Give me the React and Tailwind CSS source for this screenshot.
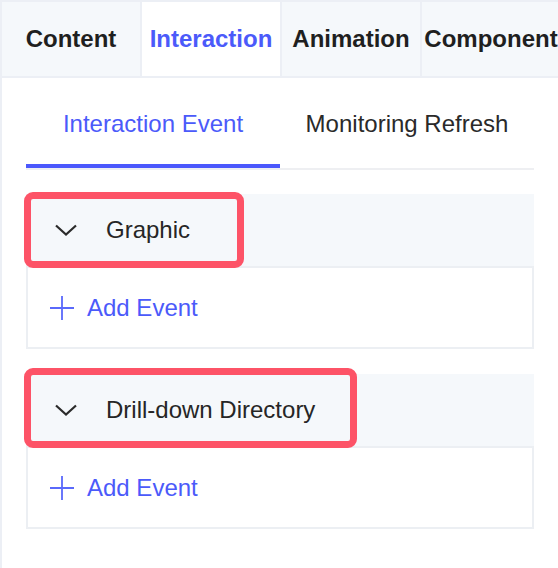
import React from 'react'

const topTabs = ['Content', 'Interaction', 'Animation', 'Component']
const subTabs = ['Interaction Event', 'Monitoring Refresh']

const sections = [
  { title: 'Graphic', gap: 'mt-6', mark: 'top-[-2px] h-[76px] w-[220px]' },
  { title: 'Drill-down Directory', gap: 'mt-[25px]', mark: 'top-[-6px] h-[80px] w-[333px]' },
]

function Chevron() {
  return (
    <svg width="22" height="12" viewBox="0 0 22 12" fill="none">
      <path d="M1 1.5 L11 10.5 L21 1.5" stroke="#2b2b2b" strokeWidth="2.2" />
    </svg>
  )
}

function PlusIcon() {
  return (
    <svg width="24" height="24" viewBox="0 0 24 24" fill="none">
      <path d="M12 0 V24 M0 12 H24" stroke="#5a69fb" strokeWidth="1.8" />
    </svg>
  )
}

export default function App() {
  return (
    <div className="h-[568px] w-[558px] overflow-hidden border-l-2 border-[#eceff5] bg-white font-['Liberation_Sans',Arial,sans-serif] text-[24px]">
      {/* top tabs */}
      <div className="flex h-[78px] gap-[2px] border-y-2 border-[#eceff5] bg-[#eceff5]">
        {topTabs.map((t, i) => (
          <div
            key={t}
            className={
              i === 1
                ? 'flex w-[138px] shrink-0 items-center justify-center bg-white font-bold text-[#4b5afa]'
                : 'flex w-[138px] shrink-0 items-center justify-center bg-[#f5f8fb] font-bold text-[#1f1f1f]'
            }
          >
            {t}
          </div>
        ))}
      </div>

      <div className="px-6">
        {/* sub tabs */}
        <div className="flex border-b-2 border-[#eeeff2]">
          {subTabs.map((t, i) => (
            <div
              key={t}
              className={
                i === 0
                  ? 'flex h-[90px] flex-1 items-center justify-center border-b-4 border-[#4b58fc] pt-[6px] text-[#4b5afa]'
                  : 'flex h-[90px] flex-1 items-center justify-center border-b-4 border-transparent pt-[6px] text-[#2a2a2a]'
              }
            >
              {t}
            </div>
          ))}
        </div>

        {sections.map((s) => (
          <div key={s.title} className={s.gap}>
            <div className="relative flex h-[72px] items-center gap-[29px] bg-[#f5f8fb] pl-[29px] text-[#262626]">
              <Chevron />
              <span>{s.title}</span>
              <div className={`absolute left-[-2px] rounded-[9px] border-[7px] border-[#fd5367] ${s.mark}`} />
            </div>
            <div className="flex h-[83px] items-center gap-[13px] border-2 border-[#eceff3] pl-[22px] text-[#4b5afa]">
              <PlusIcon />
              <span>Add Event</span>
            </div>
          </div>
        ))}
      </div>
    </div>
  )
}
